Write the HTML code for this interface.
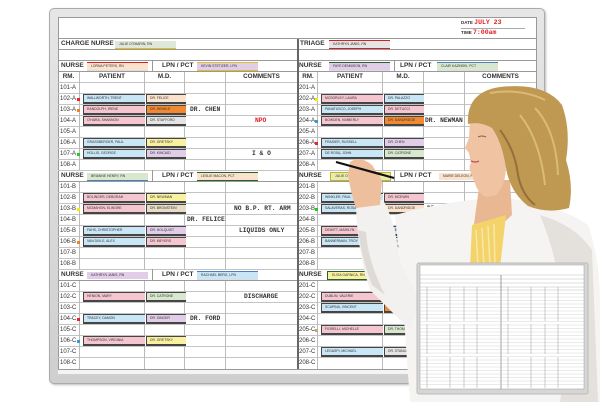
<!DOCTYPE html>
<html><head><meta charset="utf-8"><style>
*{margin:0;padding:0;box-sizing:border-box}
body{width:600px;height:402px;background:#fff;position:relative;overflow:hidden;font-family:"Liberation Sans",sans-serif;color:#333}
.frame{position:absolute;left:49px;top:8px;width:496px;height:376px;border-radius:5px;background:linear-gradient(#e6e6e6,#cfcfcf);border:1px solid #aaa;box-shadow:1px 1px 2px #bbb}
.inner{position:absolute;left:58px;top:17px;width:479px;height:355px;background:#fff;border:1px solid #999}
.foot{position:absolute;left:58px;top:369px;width:479px;height:5px;background:#f4f4f4;border-top:1px solid #999}
.half{position:absolute;top:39px}
.r{position:relative;height:11px;border-bottom:1px solid #c4c4c4;display:flex}
.r i{font-style:normal;display:block;height:11px;position:relative;border-right:1px solid #bbb;font-size:6px;line-height:10px;padding-left:2px;white-space:nowrap}
.r i:last-child{border-right:none}
.h i{text-align:center;font-weight:bold;font-size:6.3px;padding:0}
.lab{font-weight:bold;font-size:6.5px;line-height:10px;position:absolute;top:0}
.row-n{position:relative;height:11px;border-bottom:1px solid #999;border-top:1px solid #999}
.t{position:absolute;top:0;height:10px;border:1.6px solid #454545;border-bottom-width:2px;border-right:none;font-size:3.4px;line-height:6px;padding-left:3px;color:#333;overflow:hidden}
.p{left:3px;width:62px}
.m{left:1px;width:40px}
.n{position:absolute;top:1px;height:9px;font-size:3.4px;line-height:6px;padding-left:4px;border-top:1.5px solid;border-bottom:1.5px solid;overflow:hidden}
.bl{background:#c8e6f5}.pk{background:#f5c6d0}.pe{background:#fbe2cc}.or{background:#f2882f}.gy{background:#e4e4e4}.ye{background:#f9f1a0}.la{background:#e2cde8}.gr{background:#d8e8cf}.ta{background:#e8dcc6}
.hw{position:absolute;font-family:"Liberation Mono",monospace;font-size:6.3px;font-weight:bold;color:#333;top:0;line-height:10px;white-space:nowrap}
.dot{position:absolute;left:-3px;top:4px;width:3px;height:3px}
</style></head><body>
<div class="frame"></div>
<div class="inner"></div>
<div style="position:absolute;left:58px;top:38px;width:479px;border-top:1px solid #999"></div>
<div style="position:absolute;left:461px;top:19px;font-size:4.5px;font-weight:bold">DATE <span style="font-family:'Liberation Mono',monospace;color:#e02020;font-size:6.5px;">JULY 23</span></div>
<div style="position:absolute;left:461px;top:28px;width:64px;border-top:1px solid #aaa"></div>
<div style="position:absolute;left:461px;top:29px;font-size:4.5px;font-weight:bold">TIME <span style="font-family:'Liberation Mono',monospace;color:#e02020;font-size:6.5px;">7:00am</span></div>
<div style="position:absolute;left:297px;top:39px;width:2px;height:331px;background:#666"></div>

<div class="half" style="left:58px;width:239px">
 <div class="row-n" style="border-top:none"><span class="lab" style="left:3px">CHARGE NURSE</span><span class="n gr" style="left:57px;width:61px;border-color:#fff #ddd;border-bottom-color:#e0c020;background:#dfe8d8">JULIE O'SHARIN, RN</span></div>
 <div class="r" style="border-bottom-color:#999"></div>
 <div class="row-n" style="border-top:none"><span class="lab" style="left:3px">NURSE</span><span class="n pe" style="left:29px;width:61px;border-color:#c22;border-bottom-color:#ddd">LORNA PETERS, RN</span><span style="position:absolute;left:94px;top:-1px;height:11px;border-left:1px solid #999"></span><span class="lab" style="left:104px">LPN / PCT</span><span class="n la" style="left:139px;width:61px;border-color:#e0c020">KEVIN STETIZER, LPN</span></div>
 <div class="r h"><i style="width:22px">RM.</i><i style="width:65px">PATIENT</i><i style="width:40px">M.D.</i><i style="width:41px"></i><i style="width:71px">COMMENTS</i></div>
 <div class="r"><i style="width:22px">101-A</i><i style="width:65px"></i><i style="width:40px"></i><i style="width:41px"></i><i style="width:71px"></i></div>
 <div class="r"><i style="width:22px">102-A</i><i style="width:65px"><b class="dot" style="background:#e22"></b><span class="t p bl">WALLWORTH, TRENT</span></i><i style="width:40px"><span class="t m pe">DR. FELICE</span></i><i style="width:41px"></i><i style="width:71px"></i></div>
 <div class="r"><i style="width:22px">103-A</i><i style="width:65px"><b class="dot" style="background:#f08020"></b><span class="t p pk">RANDOLPH, IRENE</span></i><i style="width:40px"><span class="t m or">DR. HENKLE</span></i><i style="width:41px"><span class="hw" style="left:5px">DR. CHEN</span></i><i style="width:71px"></i></div>
 <div class="r"><i style="width:22px">104-A</i><i style="width:65px"><span class="t p pk">O'HARA, SHANNON</span></i><i style="width:40px"><span class="t m gy">DR. STAFFORD</span></i><i style="width:41px"></i><i style="width:71px"><span class="hw" style="left:29px;color:#e02020">NPO</span></i></div>
 <div class="r"><i style="width:22px">105-A</i><i style="width:65px"></i><i style="width:40px"></i><i style="width:41px"></i><i style="width:71px"></i></div>
 <div class="r"><i style="width:22px">106-A</i><i style="width:65px"><span class="t p bl">GRASSBERGER, PAUL</span></i><i style="width:40px"><span class="t m ye">DR. GRETSKY</span></i><i style="width:41px"></i><i style="width:71px"></i></div>
 <div class="r"><i style="width:22px">107-A</i><i style="width:65px"><b class="dot" style="background:#2c2"></b><span class="t p bl">HOLLIS, GEORGE</span></i><i style="width:40px"><span class="t m la">DR. KINCAID</span></i><i style="width:41px"></i><i style="width:71px"><span class="hw" style="left:26px">I &amp; O</span></i></div>
 <div class="r"><i style="width:22px">108-A</i><i style="width:65px"></i><i style="width:40px"></i><i style="width:41px"></i><i style="width:71px"></i></div>
 <div class="row-n" style="border-top:none"><span class="lab" style="left:3px">NURSE</span><span class="n gr" style="left:29px;width:61px;border-color:#fff;border-bottom-color:#4a7fc0">BRIANNE HENRY, RN</span><span style="position:absolute;left:94px;top:-1px;height:11px;border-left:1px solid #999"></span><span class="lab" style="left:104px">LPN / PCT</span><span class="n pe" style="left:139px;width:61px;border-color:#2a6030">LESLIE MACON, PCT</span></div>
 <div class="r"><i style="width:22px">101-B</i><i style="width:65px"></i><i style="width:40px"></i><i style="width:41px"></i><i style="width:71px"></i></div>
 <div class="r"><i style="width:22px">102-B</i><i style="width:65px"><span class="t p pk">BOLINGER, DEBORAH</span></i><i style="width:40px"><span class="t m ye">DR. NEWMAN</span></i><i style="width:41px"></i><i style="width:71px"></i></div>
 <div class="r"><i style="width:22px">103-B</i><i style="width:65px"><b class="dot" style="background:#ee0"></b><span class="t p pk">MCMAHON, ELINORE</span></i><i style="width:40px"><span class="t m ta">DR. BRONSTEIN</span></i><i style="width:41px"></i><i style="width:71px"><span class="hw" style="left:8px">NO B.P. RT. ARM</span></i></div>
 <div class="r"><i style="width:22px">104-B</i><i style="width:65px"></i><i style="width:40px"></i><i style="width:41px"><span class="hw" style="left:2px">DR. FELICE</span></i><i style="width:71px"></i></div>
 <div class="r"><i style="width:22px">105-B</i><i style="width:65px"><span class="t p bl">FAHS, CHRISTOPHER</span></i><i style="width:40px"><span class="t m la">DR. HOLQUIST</span></i><i style="width:41px"></i><i style="width:71px"><span class="hw" style="left:13px">LIQUIDS ONLY</span></i></div>
 <div class="r"><i style="width:22px">106-B</i><i style="width:65px"><b class="dot" style="background:#f08020"></b><span class="t p bl">VAN DIXLE, ALEX</span></i><i style="width:40px"><span class="t m pk">DR. MEYERS</span></i><i style="width:41px"></i><i style="width:71px"></i></div>
 <div class="r"><i style="width:22px">107-B</i><i style="width:65px"></i><i style="width:40px"></i><i style="width:41px"></i><i style="width:71px"></i></div>
 <div class="r"><i style="width:22px">108-B</i><i style="width:65px"></i><i style="width:40px"></i><i style="width:41px"></i><i style="width:71px"></i></div>
 <div class="row-n" style="border-top:none"><span class="lab" style="left:3px">NURSE</span><span class="n la" style="left:29px;width:61px;border-color:#fff #ddd">KATHRYN JANIS, RN</span><span style="position:absolute;left:94px;top:-1px;height:11px;border-left:1px solid #999"></span><span class="lab" style="left:104px">LPN / PCT</span><span class="n bl" style="left:139px;width:61px;border-color:#4a7fc0 #fff #ddd">RACHAEL BERG, LPN</span></div>
 <div class="r"><i style="width:22px">101-C</i><i style="width:65px"></i><i style="width:40px"></i><i style="width:41px"></i><i style="width:71px"></i></div>
 <div class="r"><i style="width:22px">102-C</i><i style="width:65px"><span class="t p pk">HENION, MARY</span></i><i style="width:40px"><span class="t m gr">DR. CATRONE</span></i><i style="width:41px"></i><i style="width:71px"><span class="hw" style="left:18px">DISCHARGE</span></i></div>
 <div class="r"><i style="width:22px">103-C</i><i style="width:65px"></i><i style="width:40px"></i><i style="width:41px"></i><i style="width:71px"></i></div>
 <div class="r"><i style="width:22px">104-C</i><i style="width:65px"><b class="dot" style="background:#e22"></b><span class="t p bl">TRACEY, DAMON</span></i><i style="width:40px"><span class="t m la">DR. SINGER</span></i><i style="width:41px"><span class="hw" style="left:5px">DR. FORD</span></i><i style="width:71px"></i></div>
 <div class="r"><i style="width:22px">105-C</i><i style="width:65px"></i><i style="width:40px"></i><i style="width:41px"></i><i style="width:71px"></i></div>
 <div class="r"><i style="width:22px">106-C</i><i style="width:65px"><b class="dot" style="background:#3a9ad8"></b><span class="t p pk">THOMPSON, VIRGINIA</span></i><i style="width:40px"><span class="t m ye">DR. GRETSKY</span></i><i style="width:41px"></i><i style="width:71px"></i></div>
 <div class="r"><i style="width:22px">107-C</i><i style="width:65px"></i><i style="width:40px"></i><i style="width:41px"></i><i style="width:71px"></i></div>
 <div class="r" style="border-bottom:none"><i style="width:22px">108-C</i><i style="width:65px"></i><i style="width:40px"></i><i style="width:41px"></i><i style="width:71px"></i></div>
</div>

<div class="half" style="left:299px;width:237px">
 <div class="row-n" style="border-top:none"><span class="lab" style="left:1px">TRIAGE</span><span class="n gy" style="left:30px;width:61px;border-color:#c22">KATHRYN JANIS, RN</span></div>
 <div class="r" style="border-bottom-color:#999"></div>
 <div class="row-n" style="border-top:none"><span class="lab" style="left:0">NURSE</span><span class="n la" style="left:30px;width:61px;border-color:#2a6030 #fff #ddd">FAYE DENNISON, RN</span><span style="position:absolute;left:95px;top:-1px;height:11px;border-left:1px solid #999"></span><span class="lab" style="left:101px">LPN / PCT</span><span class="n gr" style="left:138px;width:61px;border-color:#4a7fc0 #fff #ddd">CLAIR KAZINSKI, PCT</span></div>
 <div class="r h"><i style="width:19px">RM.</i><i style="width:65px">PATIENT</i><i style="width:41px">M.D.</i><i style="width:41px"></i><i style="width:71px">COMMENTS</i></div>
 <div class="r"><i style="width:19px;padding:0">201-A</i><i style="width:65px"></i><i style="width:41px"></i><i style="width:41px"></i><i style="width:71px"></i></div>
 <div class="r"><i style="width:19px;padding:0">202-A</i><i style="width:65px"><b class="dot" style="background:#ee0"></b><span class="t p pk">MCSORLEY, LAURA</span></i><i style="width:41px"><span class="t m bl">DR. PALAZZO</span></i><i style="width:41px"></i><i style="width:71px"></i></div>
 <div class="r"><i style="width:19px;padding:0">203-A</i><i style="width:65px"><span class="t p bl">PANATUSCO, JOSEPH</span></i><i style="width:41px"><span class="t m pk">DR. DETUCCI</span></i><i style="width:41px"></i><i style="width:71px"></i></div>
 <div class="r"><i style="width:19px;padding:0">204-A</i><i style="width:65px"><b class="dot" style="background:#3a9ad8"></b><span class="t p pk">BOWDEN, KIMBERLY</span></i><i style="width:41px"><span class="t m or">DR. DANDRIDGE</span></i><i style="width:41px"><span class="hw" style="left:1px">DR. NEWMAN</span></i><i style="width:71px"></i></div>
 <div class="r"><i style="width:19px;padding:0">205-A</i><i style="width:65px"></i><i style="width:41px"></i><i style="width:41px"></i><i style="width:71px"></i></div>
 <div class="r"><i style="width:19px;padding:0">206-A</i><i style="width:65px"><b class="dot" style="background:#e22"></b><span class="t p bl">FRASIER, RUSSELL</span></i><i style="width:41px"><span class="t m la">DR. CHEN</span></i><i style="width:41px"></i><i style="width:71px"></i></div>
 <div class="r"><i style="width:19px;padding:0">207-A</i><i style="width:65px"><span class="t p bl">DE ROSA, JOHN</span></i><i style="width:41px"><span class="t m gr">DR. CATRONE</span></i><i style="width:41px"></i><i style="width:71px"></i></div>
 <div class="r"><i style="width:19px;padding:0">208-A</i><i style="width:65px"></i><i style="width:41px"></i><i style="width:41px"></i><i style="width:71px"></i></div>
 <div class="row-n" style="border-top:none"><span class="lab" style="left:0">NURSE</span><span class="n ye" style="left:31px;width:61px;border:1.5px solid #c8b020;background:#e8ecb0">JULIE O'SHARIN, RN</span><span style="position:absolute;left:95px;top:-1px;height:11px;border-left:1px solid #999"></span><span class="lab" style="left:101px">LPN / PCT</span><span class="n pe" style="left:140px;width:61px;border-color:#fff #ddd">MARIE DELEON, PCT</span></div>
 <div class="r"><i style="width:19px;padding:0">201-B</i><i style="width:65px"></i><i style="width:41px"></i><i style="width:41px"></i><i style="width:71px"></i></div>
 <div class="r"><i style="width:19px;padding:0">202-B</i><i style="width:65px"><span class="t p bl">WINKLER, PAUL</span></i><i style="width:41px"><span class="t m pk">DR. MCEWIN</span></i><i style="width:41px"></i><i style="width:71px"></i></div>
 <div class="r"><i style="width:19px;padding:0">203-B</i><i style="width:65px"><b class="dot" style="background:#2c2"></b><span class="t p bl">SALAVERAS, ROSA</span></i><i style="width:41px"><span class="t m pe">DR. DANDRIDGE</span></i><i style="width:41px"><span class="hw" style="left:3px">DR. MILLER</span></i><i style="width:71px"></i></div>
 <div class="r"><i style="width:19px;padding:0">204-B</i><i style="width:65px"></i><i style="width:41px"></i><i style="width:41px"></i><i style="width:71px"></i></div>
 <div class="r"><i style="width:19px;padding:0">205-B</i><i style="width:65px"><span class="t p pk">DEWITT, MARILYN</span></i><i style="width:41px"><span class="t m bl">DR. ESTEVEZ</span></i><i style="width:41px"></i><i style="width:71px"></i></div>
 <div class="r"><i style="width:19px;padding:0">206-B</i><i style="width:65px"><span class="t p bl">BANNERMAN, TROY</span></i><i style="width:41px"><span class="t m gr">DR. WOROFF</span></i><i style="width:41px"></i><i style="width:71px"></i></div>
 <div class="r"><i style="width:19px;padding:0">207-B</i><i style="width:65px"></i><i style="width:41px"></i><i style="width:41px"></i><i style="width:71px"></i></div>
 <div class="r"><i style="width:19px;padding:0">208-B</i><i style="width:65px"></i><i style="width:41px"></i><i style="width:41px"></i><i style="width:71px"></i></div>
 <div class="row-n" style="border-top:none"><span class="lab" style="left:0">NURSE</span><span class="n ye" style="left:28px;width:46px;border:1.5px solid #2a6030">ELISA GARNICA, RN</span></div>
 <div class="r"><i style="width:19px;padding:0">201-C</i><i style="width:65px"></i><i style="width:41px"></i><i style="width:41px"></i><i style="width:71px"></i></div>
 <div class="r"><i style="width:19px;padding:0">202-C</i><i style="width:65px"><span class="t p pk">DUBLIN, VALERIE</span></i><i style="width:41px"></i><i style="width:41px"></i><i style="width:71px"></i></div>
 <div class="r"><i style="width:19px;padding:0">203-C</i><i style="width:65px"><span class="t p bl">SCAPINA, VINCENT</span></i><i style="width:41px"><span class="t m or">DR. HENKLE</span></i><i style="width:41px"></i><i style="width:71px"></i></div>
 <div class="r"><i style="width:19px;padding:0">204-C</i><i style="width:65px"></i><i style="width:41px"></i><i style="width:41px"></i><i style="width:71px"></i></div>
 <div class="r"><i style="width:19px;padding:0">205-C</i><i style="width:65px"><b class="dot" style="background:#c8a870"></b><span class="t p pk">FIORELLI, MICHELLE</span></i><i style="width:41px"><span class="t m gr">DR. THOMAS</span></i><i style="width:41px"></i><i style="width:71px"></i></div>
 <div class="r"><i style="width:19px;padding:0">206-C</i><i style="width:65px"></i><i style="width:41px"></i><i style="width:41px"></i><i style="width:71px"></i></div>
 <div class="r"><i style="width:19px;padding:0">207-C</i><i style="width:65px"><span class="t p bl">LEGASPI, MICHAEL</span></i><i style="width:41px"><span class="t m gy">DR. STANLEY</span></i><i style="width:41px"></i><i style="width:71px"></i></div>
 <div class="r" style="border-bottom:none"><i style="width:19px;padding:0">208-C</i><i style="width:65px"></i><i style="width:41px"></i><i style="width:41px"></i><i style="width:71px"></i></div>
</div>
<div class="foot"></div>

<svg width="600" height="402" style="position:absolute;left:0;top:0">
 <!-- coat body -->
 <path d="M400,262 L395,215 Q430,205 470,200 L505,198 Q560,205 588,225 Q600,260 600,300 L600,402 L410,402 Z" fill="#f6f4f2"/>
 <path d="M540,215 Q575,225 592,250 L598,402 L560,402 Q575,300 540,215Z" fill="#e4e0dc"/>
 <!-- sleeve -->
 <path d="M356,205 L383,200 Q395,220 400,262 L420,300 L410,330 L370,290 Q357,250 356,205Z" fill="#f3f1ef"/>
 <path d="M358,230 Q362,260 372,285 L385,295 Q368,262 366,232Z" fill="#dedad6"/>
 <!-- neck -->
 <path d="M480,180 L510,180 L512,215 L490,235 L474,224 Z" fill="#e9b892"/>
 <!-- yellow top -->
 <path d="M472,225 L506,215 L500,268 L470,268 Z" fill="#f3d36a"/>
 <path d="M476,230 L478,266 M482,228 L484,266 M488,226 L490,266 M494,224 L495,266" stroke="#f8e8a8" stroke-width="1.5"/>
 <!-- face -->
 <path d="M470,120 Q486,116 496,124 Q506,140 506,165 Q506,185 496,195 L486,197 Q477,192 475,183 L471,173 Q468,167 471,163 L469,153 L465,148 L469,138 Z" fill="#f0c4a2"/>
 <path d="M471,161 Q476,163 479,161" stroke="#c05050" stroke-width="1.3" fill="none"/>
 <path d="M478,137 Q482,135 486,137" stroke="#8a6040" stroke-width="1" fill="none"/>
 <!-- hair -->
 <path d="M468,124 Q466,92 500,87 Q545,82 562,105 Q571,130 566,160 Q574,185 569,208 Q548,214 528,206 Q510,192 506,168 Q502,142 492,128 Q480,121 468,124Z" fill="#bf9852"/>
 <path d="M500,130 Q515,150 518,175 Q522,195 535,205" stroke="#94703a" stroke-width="2" fill="none"/>
 <path d="M490,93 Q520,88 545,100 M520,115 Q540,140 545,185 M535,108 Q556,130 558,175" stroke="#d9bb76" stroke-width="2" fill="none"/>
 <!-- hand & pen -->
 <path d="M350,162 Q360,155 372,165 L382,180 L380,205 L356,208 Q350,190 348,175Z" fill="#eebf9c"/>
 <path d="M336,162 L394,178" stroke="#111" stroke-width="2.2"/>
 <!-- small board -->
 <rect x="417" y="263" width="171" height="131" rx="2" fill="#d6d6d6" stroke="#bbb"/>
 <rect x="420" y="265" width="164" height="124" fill="#fff" stroke="#999" stroke-width=".5"/>
 <g stroke="#aaa" stroke-width=".4">
  <line x1="420" y1="275" x2="584" y2="275"/><line x1="420" y1="279" x2="584" y2="279"/><line x1="420" y1="283" x2="584" y2="283"/><line x1="420" y1="287" x2="584" y2="287"/><line x1="420" y1="290" x2="584" y2="290"/>
  <line x1="501" y1="275" x2="501" y2="389" stroke="#777" stroke-width=".7"/>
 </g>
 <g stroke="#ccc" stroke-width=".4">
  <path d="M420 293.5H584M420 297H584M420 300.5H584M420 304H584M420 307.5H584M420 311H584M420 314.5H584M420 318H584M420 321.5H584M420 325H584M420 328.5H584M420 332H584M420 335.5H584M420 339H584M420 342.5H584M420 346H584M420 349.5H584M420 353H584M420 356.5H584M420 360H584M420 363.5H584M420 367H584M420 370.5H584M420 374H584M420 377.5H584M420 381H584M420 384.5H584"/>
 </g>
 <g stroke="#999" stroke-width=".5">
  <path d="M427 287V321M450 287V321M464 287V321M477 287V321M508 287V321M531 287V321M545 287V321M558 287V321"/>
  <path d="M427 324V354M450 324V354M464 324V354M477 324V354M508 324V354M531 324V354M545 324V354M558 324V354"/>
  <path d="M427 357V388M450 357V388M464 357V388M477 357V388M508 357V388M531 357V388M545 357V388M558 357V388"/>
 </g>
</svg>
</body></html>
